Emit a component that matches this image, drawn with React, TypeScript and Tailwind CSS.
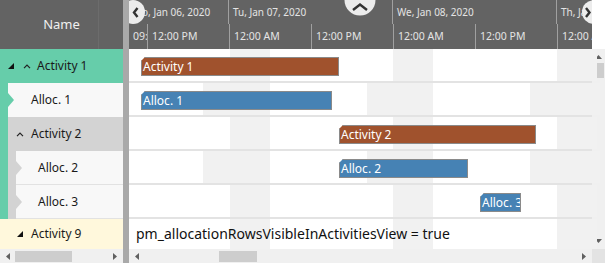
import React from "react";

type Bar = { left: number; width: number; color: string; label: string };
type Row = {
  name: string;
  kind: "act1" | "act2" | "alloc1" | "alloc2" | "act9";
  height: string;
  bands: [number, number][];
  bar?: Bar;
};

const actBands: [number, number][] = [[101, 40], [264, 40], [428, 40]];
const allocBands: [number, number][] = [[74, 67], [238, 66], [401, 70]];

const rows: Row[] = [
  { name: "Activity 1", kind: "act1", height: "h-[34px]", bands: actBands, bar: { left: 12, width: 198, color: "bg-[#a0522d]", label: "Activity 1" } },
  { name: "Alloc. 1", kind: "alloc1", height: "h-[34px]", bands: allocBands, bar: { left: 12, width: 191, color: "bg-[#4682b4]", label: "Alloc. 1" } },
  { name: "Activity 2", kind: "act2", height: "h-[34px]", bands: actBands, bar: { left: 210, width: 197, color: "bg-[#a0522d]", label: "Activity 2" } },
  { name: "Alloc. 2", kind: "alloc2", height: "h-[34px]", bands: allocBands, bar: { left: 210, width: 129, color: "bg-[#4682b4]", label: "Alloc. 2" } },
  { name: "Alloc. 3", kind: "alloc2", height: "h-[34px]", bands: actBands, bar: { left: 351, width: 41, color: "bg-[#4682b4]", label: "Alloc. 3" } },
  { name: "Activity 9", kind: "act9", height: "h-[30px]", bands: actBands },
];

const topCells = [
  { w: "w-[99px]", text: "Mo, Jan 06, 2020" },
  { w: "w-[164px]", text: "Tu, Jan 07, 2020" },
  { w: "w-[164px]", text: "We, Jan 08, 2020" },
  { w: "w-[36px]", text: "Th, Jan 09, 2020" },
];

const bottomCells = [
  { w: "w-[18px]", text: "09:" },
  { w: "w-[82px]", text: "12:00 PM" },
  { w: "w-[82px]", text: "12:00 AM" },
  { w: "w-[82px]", text: "12:00 PM" },
  { w: "w-[82px]", text: "12:00 AM" },
  { w: "w-[82px]", text: "12:00 PM" },
  { w: "w-[35px]", text: "12:00 AM" },
];

function Expander() {
  return (
    <svg width="6" height="6" viewBox="0 0 6 6" className="shrink-0">
      <path d="M6 0 L6 6 L0 6 Z" fill="#111" />
    </svg>
  );
}

function Caret() {
  return (
    <svg width="8" height="5" viewBox="0 0 8 5" className="shrink-0">
      <path d="M1 4.2 L4 1.2 L7 4.2" fill="none" stroke="#222" strokeWidth="1.2" />
    </svg>
  );
}

function Notch({ color }: { color: string }) {
  return (
    <svg width="6" height="14" viewBox="0 0 6 14" className="absolute left-0 top-[10px]">
      <path d="M0 0 L6 7 L0 14 Z" fill={color} />
    </svg>
  );
}

function Arrow({ dir }: { dir: "l" | "r" | "u" | "d" }) {
  const d = {
    l: "M4 0 L0 3.5 L4 7 Z",
    r: "M0 0 L4 3.5 L0 7 Z",
    u: "M0 4 L3.5 0 L7 4 Z",
    d: "M0 0 L3.5 4 L7 0 Z",
  }[dir];
  const horiz = dir === "l" || dir === "r";
  return (
    <svg width={horiz ? 4 : 7} height={horiz ? 7 : 4} viewBox={horiz ? "0 0 4 7" : "0 0 7 4"} className="shrink-0">
      <path d={d} fill="#606060" />
    </svg>
  );
}

function NameCell({ row }: { row: Row }) {
  const base = `relative ${row.height} flex items-center text-[12px] text-[#1a1a1a]`;
  if (row.kind === "act1") {
    return (
      <div className={`${base} bg-[#66cdaa] pl-[8px]`}>
        <Expander />
        <span className="ml-[9px]"><Caret /></span>
        <span className="ml-[6px]">{row.name}</span>
      </div>
    );
  }
  if (row.kind === "alloc1") {
    return (
      <div className={`${base} bg-[#66cdaa] pl-[8px]`}>
        <div className="relative h-full flex-1 flex items-center bg-[#f8f8f8] pl-[23px]">
          <Notch color="#66cdaa" />
          {row.name}
        </div>
      </div>
    );
  }
  if (row.kind === "act2") {
    return (
      <div className={`${base} bg-[#66cdaa] pl-[8px]`}>
        <div className="h-full flex-1 flex items-center bg-[#d3d3d3] pl-[8px]">
          <Caret />
          <span className="ml-[7px]">{row.name}</span>
        </div>
      </div>
    );
  }
  if (row.kind === "alloc2") {
    return (
      <div className={`${base} bg-[#66cdaa] pl-[8px]`}>
        <div className="h-full flex-1 flex bg-[#d3d3d3] pl-[8px]">
          <div className="relative h-full flex-1 flex items-center bg-[#f8f8f8] pl-[22px] border-b border-[#e2e2e2]">
            <Notch color="#d3d3d3" />
            {row.name}
          </div>
        </div>
      </div>
    );
  }
  return (
    <div className={`${base} bg-[#fff8dc] pl-[17px]`}>
      <Expander />
      <span className="ml-[8px]">{row.name}</span>
    </div>
  );
}

function ChartRow({ row, last }: { row: Row; last: boolean }) {
  return (
    <div className={`relative ${row.height} bg-white ${last ? "" : "border-b-2 border-[#e3e3e3]"}`}>
      {row.bands.map(([l, w], i) => (
        <div key={i} className="absolute top-0 bottom-0 bg-[#f1f1f1]" style={{ left: l, width: w }} />
      ))}
      {row.bar && (
        <div
          className={`absolute top-[8px] h-[19px] ${row.bar.color} border border-[#8a8a8a] text-white text-[12px] leading-[17px] pl-[1px] whitespace-nowrap overflow-hidden [clip-path:polygon(4px_0,100%_0,100%_100%,0_100%,0_4px)]`}
          style={{ left: row.bar.left, width: row.bar.width }}
        >
          {row.bar.label}
        </div>
      )}
      {last && (
        <div className="absolute left-[7px] top-[4px] text-[14px] text-[#111] whitespace-nowrap">
          pm_allocationRowsVisibleInActivitiesView = true
        </div>
      )}
    </div>
  );
}

export default function App() {
  return (
    <div className="w-[605px] h-[263px] flex bg-white overflow-hidden font-['Noto_Sans',sans-serif]">
      {/* left grid */}
      <div className="w-[123px] flex flex-col">
        <div className="relative h-[49px] bg-[#636363] flex items-center justify-center text-[13px] text-[#f0f0f0]">
          Name
          <div className="absolute left-[98px] top-0 bottom-0 w-px bg-[#6c6c6c]" />
        </div>
        {rows.map((r, i) => (
          <NameCell key={i} row={r} />
        ))}
        <div className="h-[14px] bg-[#f0f0f0] flex items-center px-[6px]">
          <Arrow dir="l" />
          <div className="ml-[5px] w-[57px] h-[11px] bg-[#cdcdcd]" />
          <div className="flex-1" />
          <Arrow dir="r" />
        </div>
      </div>

      {/* splitter */}
      <div className="w-[6px] h-full bg-[#a9a9a9]" />

      {/* chart */}
      <div className="flex-1 flex flex-col">
        <div className="flex flex-1">
          <div className="w-[463px] flex flex-col">
            <div className="relative h-[49px] bg-[#636363] text-[#e4e4e4] overflow-hidden whitespace-nowrap">
              <div className="h-[24px] flex">
                {topCells.map((c, i) => (
                  <div key={i} className={`${c.w} shrink-0 h-full pl-[4px] flex items-center text-[10px] overflow-hidden ${i > 0 ? "border-l border-[#a0a0a0]" : ""}`}>
                    {c.text}
                  </div>
                ))}
              </div>
              <div className="h-[25px] flex">
                {bottomCells.map((c, i) => (
                  <div key={i} className={`${c.w} shrink-0 h-full pl-[4px] flex items-center text-[10.5px] overflow-hidden ${i > 0 ? "border-l border-[#a0a0a0]" : ""}`}>
                    {c.text}
                  </div>
                ))}
              </div>
              <svg width="17" height="25" viewBox="0 0 17 25" className="absolute left-0 top-0">
                <circle cx="4" cy="12" r="12" fill="#ececec" />
                <path d="M8.5 8 L5 12.5 L8.5 17" fill="none" stroke="#333" strokeWidth="2.4" />
              </svg>
              <svg width="32" height="17" viewBox="0 0 32 17" className="absolute left-[215px] top-0">
                <circle cx="16" cy="0" r="15.5" fill="#ececec" />
                <path d="M9 10 L16 4.5 L23 10" fill="none" stroke="#333" strokeWidth="2.4" />
              </svg>
              <svg width="10" height="25" viewBox="0 0 10 25" className="absolute right-0 top-0">
                <circle cx="12" cy="12" r="12" fill="#ececec" />
                <path d="M4 8 L7.5 12.5 L4 17" fill="none" stroke="#333" strokeWidth="2.4" />
              </svg>
            </div>
            {rows.map((r, i) => (
              <ChartRow key={i} row={r} last={i === rows.length - 1} />
            ))}
          </div>
          {/* vertical scrollbar */}
          <div className="w-[13px] flex flex-col">
            <div className="h-[49px] bg-white" />
            <div className="flex-1 bg-[#f0f0f0] flex flex-col items-center pt-[6px] pb-[6px]">
              <Arrow dir="u" />
              <div className="mt-[4px] w-[10px] h-[15px] bg-[#cdcdcd]" />
              <div className="flex-1" />
              <Arrow dir="d" />
            </div>
          </div>
        </div>
        <div className="h-[14px] flex">
          <div className="w-[463px] bg-[#f0f0f0] flex items-center px-[6px]">
            <Arrow dir="l" />
            <div className="ml-[80px] w-[38px] h-[11px] bg-[#cdcdcd]" />
            <div className="flex-1" />
            <Arrow dir="r" />
          </div>
          <div className="w-[13px] bg-[#e3e3e3]" />
        </div>
      </div>
    </div>
  );
}
